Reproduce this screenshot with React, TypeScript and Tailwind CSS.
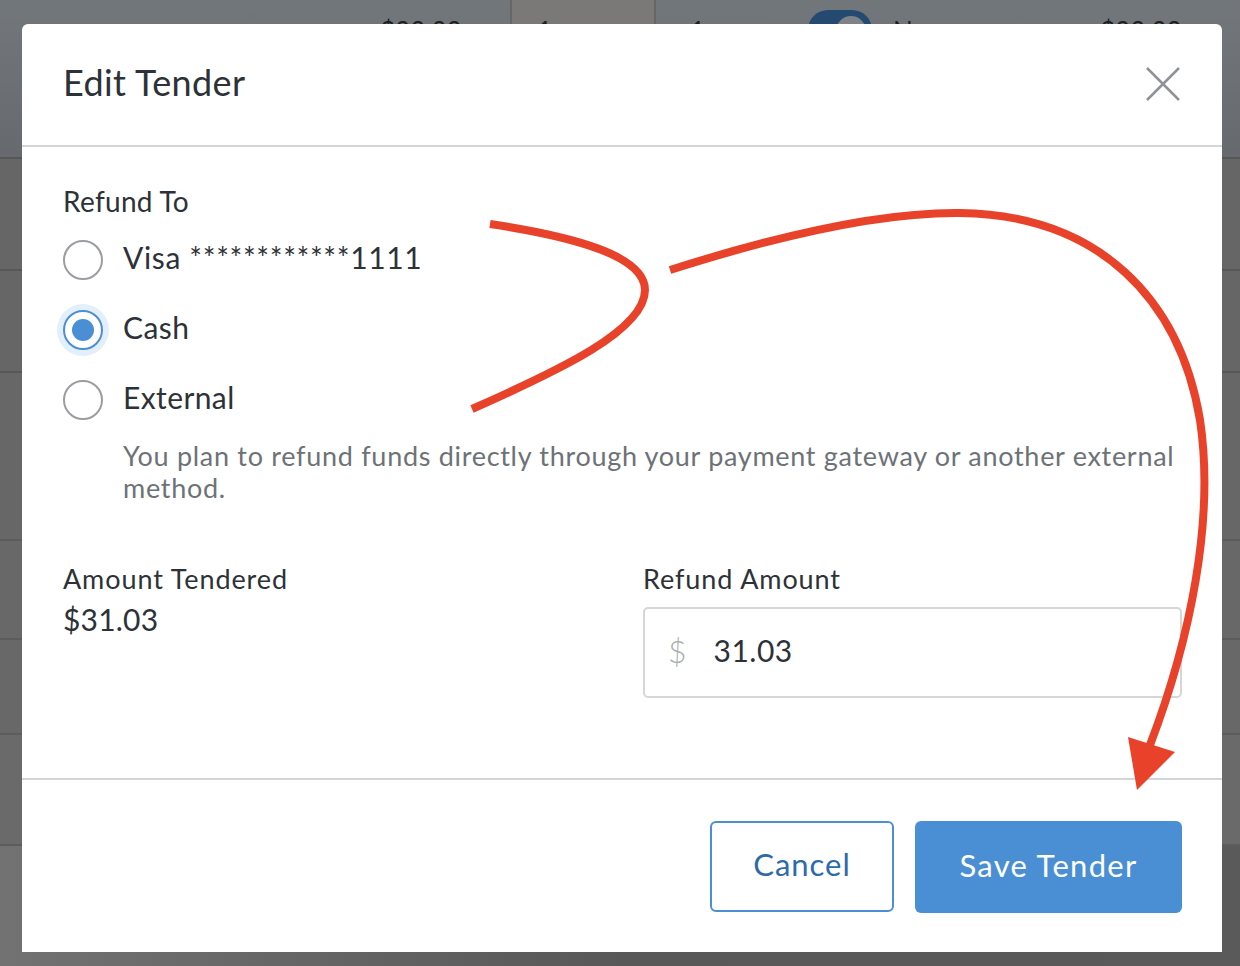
import React from "react";

const font = { fontFamily: "Lato, 'Noto Sans', sans-serif" };

function Radio({ checked }: { checked?: boolean }) {
  if (checked) {
    return (
      <div className="flex h-[40px] w-[40px] shrink-0 items-center justify-center rounded-full shadow-[0_0_0_6px_#e3f0fb]">
        <div className="flex h-[40px] w-[40px] items-center justify-center rounded-full border-2 border-[#4a8fd4] bg-white">
          <div className="h-[22px] w-[22px] rounded-full bg-[#4a8fd4]" />
        </div>
      </div>
    );
  }
  return <div className="h-[40px] w-[40px] shrink-0 rounded-full border-2 border-[#9a9da1] bg-white" />;
}

export default function App() {
  return (
    <div className="relative h-[966px] w-[1240px] overflow-hidden bg-[#606060]" style={font}>
      {/* background page */}
      <div className="flex h-full flex-col">
        <div className="flex h-[159px] bg-gradient-to-b from-[#72777c] to-[#666a6e] border-b-2 border-[#575757]">
          <div className="w-[510px]" />
          <div className="w-[146px] border-x-2 border-[#666] bg-[#7a7978]" />
          <div className="flex-1" />
        </div>
        <div className="h-[112px] border-b-2 border-[#575757] bg-[#666]" />
        <div className="h-[102px] border-b-2 border-[#575757] bg-[#666]" />
        <div className="h-[168px] border-b-2 border-[#5c5c5c] bg-[#676767]" />
        <div className="h-[99px] border-b-2 border-[#5c5c5c] bg-[#686868]" />
        <div className="h-[95px] border-b-2 border-[#5c5c5c] bg-[#686868]" />
        <div className="h-[111px] border-b-2 border-[#5c5c5c] bg-[#6a6a6a]" />
        <div className="flex-1 bg-gradient-to-r from-[#727272] via-[#585858] to-[#5a5a5a]" />
      </div>

      {/* top peeking content */}
      <div className="absolute left-[380px] top-[12px] text-[26px] text-[#1d1f22]">$33.33</div>
      <div className="absolute left-[537px] top-[12px] text-[26px] text-[#1d1f22]">1</div>
      <div className="absolute left-[690px] top-[12px] text-[26px] text-[#1d1f22]">1+</div>
      <div className="absolute left-[808px] top-[10px] h-[40px] w-[64px] rounded-full bg-[#244a70]">
        <div className="absolute left-[28px] top-[6px] h-[30px] w-[30px] rounded-full bg-[#7e8389]" />
      </div>
      <div className="absolute left-[893px] top-[12px] text-[26px] text-[#1d1f22]">N</div>
      <div className="absolute left-[1100px] top-[12px] text-[26px] text-[#1d1f22]">$33.33</div>

      {/* modal */}
      <div className="absolute left-[22px] top-[24px] flex h-[928px] w-[1200px] flex-col rounded-t-[6px] bg-white">
        <div className="flex h-[123px] items-center justify-between border-b-2 border-[#d4d5d6] pl-[41px] pr-[42px]">
          <div className="mt-[-5px] text-[36px] leading-[44px] tracking-[0.4px] text-[#2d3238]">Edit Tender</div>
          <svg width="34" height="34" viewBox="0 0 34 34" className="mt-[-2px]">
            <path d="M1 1 L33 33 M33 1 L1 33" stroke="#8f9397" strokeWidth="2.5" fill="none" />
          </svg>
        </div>

        <div className="flex flex-col pl-[41px] pr-[40px] pt-[36px]">
          <div className="mt-[-2px] text-[28px] leading-[40px] tracking-[0.3px] text-[#2d3238]">Refund To</div>
          <div className="mt-[19px] flex flex-col gap-[30px]">
            <div className="flex h-[40px] items-center gap-[20px]">
              <Radio />
              <span className="relative top-[-3px] text-[30px] tracking-[0.65px] text-[#2d3238]">Visa ************1111</span>
            </div>
            <div className="flex h-[40px] items-center gap-[20px]">
              <Radio checked />
              <span className="relative top-[-3px] text-[30px] tracking-[0.4px] text-[#2d3238]">Cash</span>
            </div>
            <div className="flex h-[40px] items-center gap-[20px]">
              <Radio />
              <span className="relative top-[-3px] text-[30px] tracking-[0.4px] text-[#2d3238]">External</span>
            </div>
          </div>
          <div className="mt-[20px] pl-[60px] text-[27px] leading-[32px] tracking-[0.7px] text-[#6d7278]">
            You plan to refund funds directly through your payment gateway or another external method.
          </div>

          <div className="mt-[57px] grid grid-cols-2 gap-x-[41px]">
            <div className="flex flex-col">
              <div className="text-[27px] leading-[36px] tracking-[0.9px] text-[#2d3238]">Amount Tendered</div>
              <div className="mt-[4px] text-[30px] leading-[36px] tracking-[0.2px] text-[#2d3238]">$31.03</div>
            </div>
            <div className="flex flex-col">
              <div className="text-[27px] leading-[36px] tracking-[0.9px] text-[#2d3238]">Refund Amount</div>
              <div className="mt-[10px] flex h-[91px] items-center rounded-[5px] border-2 border-[#d6d6d6] pl-[23px]">
                <span className="relative top-[-2px] text-[32px] font-light text-[#a9acaf]">$</span>
                <span className="relative top-[-2px] ml-[27px] text-[30px] tracking-[0.5px] text-[#2d3238]">31.03</span>
              </div>
            </div>
          </div>
        </div>

        <div className="mt-[80px] flex flex-1 items-start justify-end gap-[21px] border-t-2 border-[#d4d5d6] pr-[40px] pt-[41px]">
          <button className="flex h-[91px] w-[184px] items-center justify-center rounded-[6px] border-2 border-[#4a8fd4] bg-white pb-[4px] text-[31px] tracking-[1px] text-[#2f6aa8]">
            Cancel
          </button>
          <button className="flex h-[92px] w-[267px] items-center justify-center rounded-[6px] bg-[#4a8fd4] pb-[4px] text-[31px] tracking-[1.3px] text-white">
            Save Tender
          </button>
        </div>
      </div>

      {/* annotation arrows */}
      <svg className="pointer-events-none absolute left-0 top-0" width="1240" height="966" viewBox="0 0 1240 966">
        <path d="M490,224 C570,236 645,255 645,290 C645,330 560,370 472,409" stroke="#e8432a" strokeWidth="8" fill="none" />
        <path d="M670,270 C780,235 880,212 960,213 C1100,215 1180,300 1200,420 C1215,520 1190,640 1150,745" stroke="#e8432a" strokeWidth="8" fill="none" />
        <polygon points="1128,737 1175,752 1137,790" fill="#e8432a" />
      </svg>
    </div>
  );
}
